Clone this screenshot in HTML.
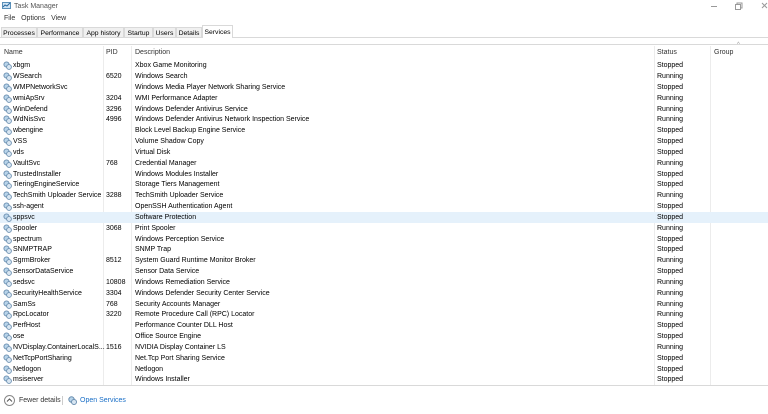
<!DOCTYPE html><html><head><style>
body{margin:0;width:768px;height:414px;background:#fff;font-family:"Liberation Sans",sans-serif;font-size:7px;color:#000;position:relative;overflow:hidden}
.a{position:absolute;white-space:nowrap}
.tab{position:absolute;top:27px;height:11px;line-height:11px;background:#f0f0f0;border:1px solid #d9d9d9;box-sizing:border-box;padding:0;text-align:center;font-size:6.8px;white-space:nowrap;overflow:hidden}
.row{position:absolute;left:0;width:768px;height:11px;line-height:11px}
.row span{position:absolute}
.ic{position:absolute;left:3px;top:1px}
.vl{position:absolute;top:46px;height:339px;width:1px;background:#ececec}
</style></head><body>
<svg class="a" style="left:2px;top:2px" width="9" height="8"><rect x="0.5" y="0.5" width="8" height="6" fill="#cfe3f3" stroke="#5a8fb8"/><polyline points="1,5 3,3 5,4 8,1" stroke="#2a6aa0" fill="none"/></svg>
<div class="a" style="left:14px;top:2px;color:#555;line-height:9px">Task Manager</div>
<svg class="a" style="left:700px;top:1px" width="68" height="10"><line x1="11" y1="5.5" x2="17" y2="5.5" stroke="#999"/><rect x="35.5" y="3.5" width="5" height="5" fill="none" stroke="#999"/><polyline points="37,3.5 37,2 42,2 42,7 40.5,7" fill="none" stroke="#999"/><line x1="62" y1="2" x2="67" y2="7" stroke="#999"/><line x1="67" y1="2" x2="62" y2="7" stroke="#999"/></svg>
<div class="a" style="left:4px;top:14px;color:#333;line-height:9px">File&nbsp;&nbsp; Options&nbsp;&nbsp; View</div>
<div class="a" style="left:0;top:37px;width:768px;height:1px;background:#d9d9d9"></div>
<div class="tab" style="left:1px;width:36px">Processes</div>
<div class="tab" style="left:37px;width:46px">Performance</div>
<div class="tab" style="left:83px;width:41px">App history</div>
<div class="tab" style="left:124px;width:29px">Startup</div>
<div class="tab" style="left:153px;width:23px">Users</div>
<div class="tab" style="left:176px;width:26px">Details</div>
<div class="tab" style="left:202px;width:31px;top:25px;height:13px;line-height:13px;background:#fff;border-bottom:none">Services</div>
<div class="a" style="left:0;top:44px;width:768px;height:1px;background:#d9d9d9"></div>
<div class="vl" style="left:103px"></div><div class="vl" style="left:131px"></div><div class="vl" style="left:654px"></div><div class="vl" style="left:710px"></div>
<div class="a" style="left:4px;top:48px;line-height:9px;color:#333">Name</div>
<div class="a" style="left:106px;top:48px;line-height:9px;color:#333">PID</div>
<div class="a" style="left:135px;top:48px;line-height:9px;color:#333">Description</div>
<div class="a" style="left:657px;top:48px;line-height:9px;color:#333">Status</div>
<div class="a" style="left:714px;top:48px;line-height:9px;color:#333">Group</div>
<div class="a" style="left:737px;top:42px;color:#999;font-size:6px">^</div>
<div id="rows"></div>
<div class="a" style="left:0;top:385px;width:768px;height:1px;background:#d9d9d9"></div>
<svg class="a" style="left:4px;top:395px" width="11" height="11"><circle cx="5.5" cy="5.5" r="5" fill="none" stroke="#888"/><polyline points="3,6.5 5.5,4 8,6.5" fill="none" stroke="#555"/></svg>
<div class="a" style="left:19px;top:396px;line-height:9px;color:#333">Fewer details</div>
<div class="a" style="left:62px;top:396px;width:1px;height:9px;background:#ccc"></div>
<svg class="a" style="left:68px;top:396px" width="9" height="9"><circle cx="3.5" cy="3.5" r="2.7" fill="#b8d4ea" stroke="#6b8fb0"/><circle cx="6" cy="6" r="2.5" fill="#d8e6f2" stroke="#6b8fb0"/></svg>
<div class="a" style="left:80px;top:396px;line-height:9px;color:#1a6fc7">Open Services</div>
<script>
var d=[["xbgm","","Xbox Game Monitoring","Stopped"],["WSearch","6520","Windows Search","Running"],["WMPNetworkSvc","","Windows Media Player Network Sharing Service","Stopped"],["wmiApSrv","3204","WMI Performance Adapter","Running"],["WinDefend","3296","Windows Defender Antivirus Service","Running"],["WdNisSvc","4996","Windows Defender Antivirus Network Inspection Service","Running"],["wbengine","","Block Level Backup Engine Service","Stopped"],["VSS","","Volume Shadow Copy","Stopped"],["vds","","Virtual Disk","Stopped"],["VaultSvc","768","Credential Manager","Running"],["TrustedInstaller","","Windows Modules Installer","Stopped"],["TieringEngineService","","Storage Tiers Management","Stopped"],["TechSmith Uploader Service","3288","TechSmith Uploader Service","Running"],["ssh-agent","","OpenSSH Authentication Agent","Stopped"],["sppsvc","","Software Protection","Stopped"],["Spooler","3068","Print Spooler","Running"],["spectrum","","Windows Perception Service","Stopped"],["SNMPTRAP","","SNMP Trap","Stopped"],["SgrmBroker","8512","System Guard Runtime Monitor Broker","Running"],["SensorDataService","","Sensor Data Service","Stopped"],["sedsvc","10808","Windows Remediation Service","Running"],["SecurityHealthService","3304","Windows Defender Security Center Service","Running"],["SamSs","768","Security Accounts Manager","Running"],["RpcLocator","3220","Remote Procedure Call (RPC) Locator","Running"],["PerfHost","","Performance Counter DLL Host","Stopped"],["ose","","Office  Source Engine","Stopped"],["NVDisplay.ContainerLocalS...","1516","NVIDIA Display Container LS","Running"],["NetTcpPortSharing","","Net.Tcp Port Sharing Service","Stopped"],["Netlogon","","Netlogon","Stopped"],["msiserver","","Windows Installer","Stopped"]];
var h="";for(var i=0;i<d.length;i++){var t=60.3+i*10.83;if(t>380)break;var r=d[i];
h+='<div class="row" style="top:'+t+'px;'+(i==14?'background:#e5f1fb':'')+'"><svg class="ic" width="9" height="9"><circle cx="3.5" cy="3.5" r="2.6" fill="#b8d4ea" stroke="#6b8fb0" stroke-width=".9"/><circle cx="6" cy="6" r="2.4" fill="#d8e6f2" stroke="#6b8fb0" stroke-width=".9"/></svg><span style="left:13px">'+r[0]+'</span><span style="left:106px">'+r[1]+'</span><span style="left:135px">'+r[2]+'</span><span style="left:657px">'+r[3]+'</span></div>';}
document.getElementById("rows").innerHTML=h;
</script>
</body></html>
